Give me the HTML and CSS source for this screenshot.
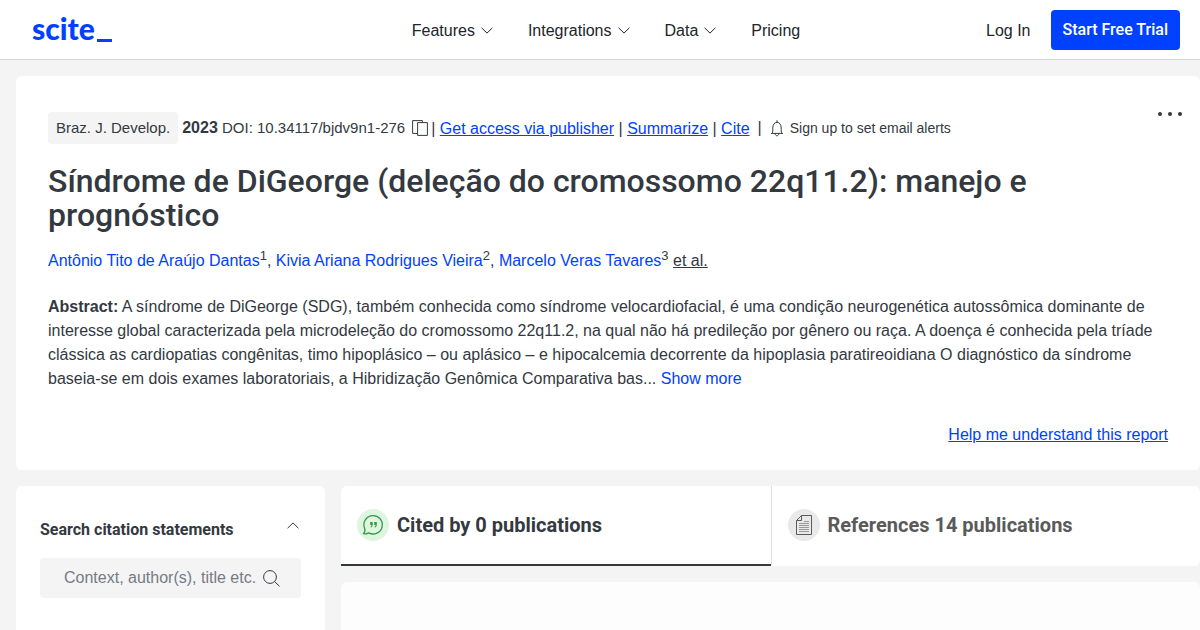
FILE: index.html
```html
<!DOCTYPE html>
<html lang="en">
<head>
<meta charset="utf-8">
<meta name="viewport" content="width=device-width, initial-scale=1">
<title>Síndrome de DiGeorge - scite</title>
<link rel="stylesheet" href="styles.css">
</head>
<body>
<header class="topbar">
  <a class="logo" href="#" aria-label="scite home">scite<span class="logo-cursor"></span></a>
  <nav class="nav">
    <button class="nav-item" type="button">Features <svg class="chevron" viewBox="0 0 12 7"><path d="M.6.8 6 6.1 11.4.8"/></svg></button>
    <button class="nav-item" type="button">Integrations <svg class="chevron" viewBox="0 0 12 7"><path d="M.6.8 6 6.1 11.4.8"/></svg></button>
    <button class="nav-item" type="button">Data <svg class="chevron" viewBox="0 0 12 7"><path d="M.6.8 6 6.1 11.4.8"/></svg></button>
    <a class="nav-item" href="#">Pricing</a>
  </nav>
  <div class="account">
    <a class="login" href="#">Log In</a>
    <a class="trial" href="#">Start Free Trial</a>
  </div>
</header>

<main class="page">
  <section class="card paper">
    <button class="more" type="button" aria-label="More options"><svg viewBox="0 0 24 4"><circle cx="2" cy="2" r="2"/><circle cx="12" cy="2" r="2"/><circle cx="22" cy="2" r="2"/></svg></button>
    <div class="meta">
      <span class="journal">Braz. J. Develop.</span>
      <span class="doi"><strong>2023</strong> DOI: 10.34117/bjdv9n1-276</span>
      <button class="copy" type="button" aria-label="Copy DOI"><svg viewBox="0 0 16 16"><path d="M5.500 13.400H.6V.6h9.800v2M5.600 2.600h9.800v12.800H5.600z"/></svg></button>
      <span class="links">| <a href="#">Get access via publisher</a> | <a href="#">Summarize</a> | <a href="#">Cite</a></span>
      <span class="bar">|</span>
      <button class="alerts" type="button"><svg viewBox="0 0 14 17"><path d="M1 13.400h12M2.200 13.400c.7-1.300.6-3 .6-5.400C2.800 4.500 4.600 2.300 7 2.300s4.200 2.200 4.200 5.700c0 2.400-.1 4.100.6 5.400M7 .3v2M5.300 13.800c.1 2.600 3.300 2.600 3.400 0"/></svg>Sign up to set email alerts</button>
    </div>
    <h1 class="title">Síndrome de DiGeorge (deleção do cromossomo 22q11.2): manejo e prognóstico</h1>
    <p class="authors"><a href="#">Antônio Tito de Araújo Dantas</a><sup>1</sup>, <a href="#">Kivia Ariana Rodrigues Vieira</a><sup>2</sup>, <a href="#">Marcelo Veras Tavares</a><sup>3</sup> <button class="et-al" type="button">et al.</button></p>
    <p class="abstract"><strong>Abstract:</strong> A síndrome de DiGeorge (SDG), também conhecida como síndrome velocardiofacial, é uma condição neurogenética autossômica dominante de interesse global caracterizada pela microdeleção do cromossomo 22q11.2, na qual não há predileção por gênero ou raça. A doença é conhecida pela tríade clássica as cardiopatias congênitas, timo hipoplásico – ou aplásico – e hipocalcemia decorrente da hipoplasia paratireoidiana O diagnóstico da síndrome baseia-se em dois exames laboratoriais, a Hibridização Genômica Comparativa bas... <button class="show-more" type="button">Show more</button></p>
    <a class="help" href="#">Help me understand this report</a>
  </section>

  <div class="columns">
    <aside class="card filters">
      <div class="filters-head">
        <label for="search">Search citation statements</label>
        <button class="collapse" type="button" aria-label="Collapse"><svg class="chevron" viewBox="0 0 12 7"><path d="M.6 6.200 6 .9l5.400 5.300"/></svg></button>
      </div>
      <div class="search">
        <input id="search" type="text" placeholder="Context, author(s), title etc.">
        <button class="search-go" type="button" aria-label="Search"><svg viewBox="0 0 17 17"><circle cx="7" cy="7" r="6.400"/><path d="m11.600 11.600 4.900 4.700"/></svg></button>
      </div>
    </aside>
    <div class="results">
      <div class="card tabs" role="tablist">
        <button class="tab active" type="button" role="tab" aria-selected="true">
          <svg class="tab-icon cited" viewBox="0 0 32 32"><circle class="disc" cx="16" cy="16" r="16"/><path class="line" d="M7.600 19.300A9.200 9.200 0 1 1 11.800 23.900C10.300 24.800 8.500 25 6.700 24.500 7.900 23.200 8.300 21.300 7.600 19.300z"/><path class="quote" d="M13.200 13h2.500v2.500c0 1.500-.7 2.700-1.900 3.100l-.3-.6c.7-.4 1-1.100 1-1.900h-1.300zM17.300 13h2.500v2.500c0 1.500-.7 2.700-1.900 3.100l-.3-.6c.7-.4 1-1.100 1-1.900h-1.300z"/></svg>
          Cited by 0 publications
        </button>
        <button class="tab" type="button" role="tab" aria-selected="false">
          <svg class="tab-icon refs" viewBox="0 0 32 32"><circle class="disc" cx="16" cy="16" r="16"/><path class="line" d="M13.500 6.500h10v19h-15v-14zM13.500 6.500v5h-5"/><path class="rows" d="M16 12.500h5M11 14.500h10M11 16.500h10M11 18.500h10M11 20.500h10M11 22.500h10"/></svg>
          References 14 publications
        </button>
      </div>
      <section class="card panel" role="tabpanel" aria-label="Citation statements"></section>
    </div>
  </div>
</main>
</body>
</html>
```
FILE: styles.css
```css
* { box-sizing: border-box; }

body {
  margin: 0;
  background: #f4f4f4;
  color: #33393f;
  font: 16px/24px "Liberation Sans", Arial, sans-serif;
}

button {
  padding: 0;
  border: 0;
  background: none;
  color: inherit;
  font: inherit;
  cursor: pointer;
}

a { color: #0041ff; }
svg { display: block; fill: none; stroke: currentColor; }

.topbar {
  display: grid;
  grid-template-columns: 1fr auto 1fr;
  align-items: center;
  height: 60px;
  padding: 0 20px 0 32px;
  border-bottom: 1px solid #d8d8d8;
  background: #fff;
  color: #212529;
}

.logo {
  display: flex;
  align-items: flex-end;
  gap: 2px;
  padding-bottom: 4px;
  font: 900 30px/36px Lato, sans-serif;
  text-decoration: none;
}
.logo-cursor { width: 15px; height: 3px; margin-bottom: 4px; background: #0041ff; }

.nav { display: flex; gap: 35px; padding-top: 2px; }
.nav-item {
  display: flex;
  align-items: center;
  gap: 6px;
  color: inherit;
  text-decoration: none;
}
.chevron { width: 12px; height: 7px; }

.account { display: flex; align-items: center; justify-content: flex-end; gap: 20px; }
.login { padding-top: 2px; color: inherit; text-decoration: none; }
.trial {
  padding: 8px 12px;
  border-radius: 4px;
  background: #0041ff;
  color: #fff;
  font-family: Roboto, sans-serif;
  font-weight: 500;
  text-decoration: none;
}

.page { display: flex; flex-direction: column; gap: 16px; padding: 16px 0 0 16px; }
.card { border-radius: 6px; background: #fff; }

.paper { position: relative; padding: 36px 32px 23px; }
.more { position: absolute; top: 36px; right: 18px; }
.more svg { width: 24px; height: 4px; fill: currentColor; stroke: none; }

.meta { display: flex; align-items: center; height: 32px; white-space: nowrap; }
.journal { margin-right: 4px; padding: 4px 8px; border-radius: 4px; background: #f4f4f4; }
.journal, .doi { font-size: 15px; }
.doi strong { font-size: 16px; }
.links { padding-top: 2px; }
.copy { margin: 0 3px 0 7px; }
.copy svg { width: 16px; height: 16px; }
.bar { margin: 0 8px; }
.alerts { display: flex; align-items: center; gap: 6px; font-size: 14px; }
.alerts svg { width: 14px; height: 17px; }

.title {
  margin: 20px 0 0;
  font: 500 32px/34px Roboto, sans-serif;
}
.authors { margin: 17px 0 0; }
.authors a { text-decoration: none; }
.authors sup { font-size: 13px; line-height: 0; }
.et-al { text-decoration: underline; }
.abstract { margin: 22px 0 0; }
.show-more { color: #0041ff; }
.help { display: block; width: fit-content; margin: 32px 0 0 auto; }

.columns { display: grid; grid-template-columns: 309px 1fr; gap: 16px; }
.filters { min-height: 160px; padding: 32px 24px; }
.filters-head { display: flex; justify-content: space-between; align-items: flex-start; }
.filters-head label { font-family: Roboto, sans-serif; font-weight: 700; }
.collapse { margin-right: 2px; padding-top: 4px; }
.search {
  display: flex;
  align-items: center;
  height: 40px;
  margin-top: 16px;
  padding: 0 21px 0 24px;
  border-radius: 4px;
  background: #f4f4f4;
}
.search input {
  flex: 1;
  min-width: 0;
  padding: 0;
  border: 0;
  background: none;
  color: inherit;
  font: inherit;
}
.search input::placeholder { color: #757b86; opacity: 1; }
.search-go svg { width: 17px; height: 17px; }

.results { display: flex; flex-direction: column; gap: 16px; }
.tabs { display: grid; grid-template-columns: 1fr 1fr; height: 80px; }
.tab {
  display: flex;
  align-items: center;
  gap: 8px;
  padding: 0 16px;
  border-bottom: 2px solid transparent;
  color: #5a5a5a;
  font: 700 20px/24px Roboto, sans-serif;
}
.tab + .tab { border-left: 1px solid #e0e0e0; }
.tab.active { border-bottom-color: #33393f; color: #33393f; }
.tab-icon { width: 32px; height: 32px; }
.disc { stroke: none; }
.cited { color: #2f9e44; }
.cited .disc { fill: #dff5e1; }
.cited .line { stroke-width: 1.3; }
.quote { fill: currentColor; stroke: none; }
.refs .disc { fill: #e9e9e9; }
.rows { stroke: #999; }
.panel { flex: 1; background: #fdfdfd; }
```
